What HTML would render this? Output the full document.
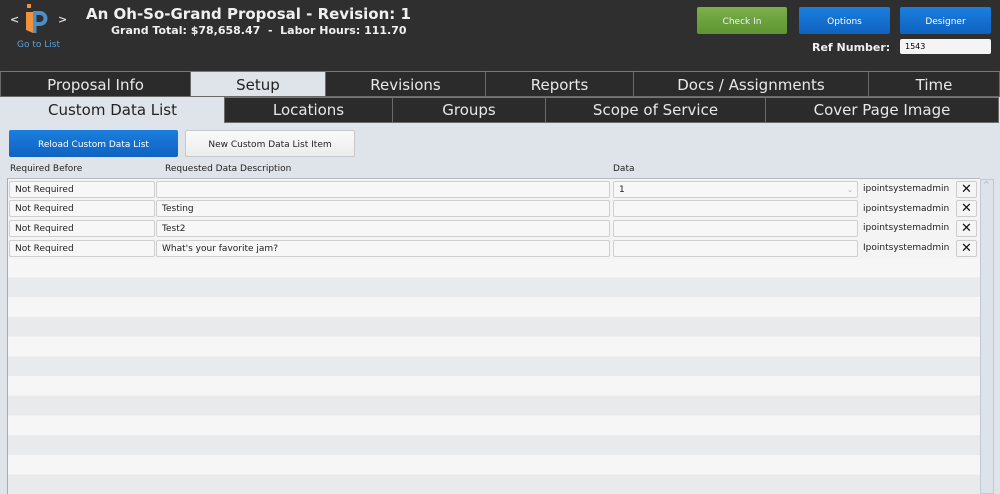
<!DOCTYPE html>
<html><head><style>
*{box-sizing:border-box;margin:0;padding:0}
body{width:1000px;height:494px;overflow:hidden;background:#dfe4ea;font-family:"DejaVu Sans","Liberation Sans",sans-serif;position:relative}
.a{position:absolute}
.hdr{left:0;top:0;width:1000px;height:71px;background:#2f2f2f}
.tab{position:absolute;background:#2b2b2b;color:#e8e8e8;text-align:center;font-size:15px;border:1px solid #6a6a6a;border-top-color:#777}
.tab.on{background:#dfe4ea;color:#222}
.btn{position:absolute;border-radius:2px;font-size:9px;display:flex;align-items:center;justify-content:center;padding-top:2px}
.fld{position:absolute;height:17px;background:#f7f7f7;border:1px solid #cfcfcf;border-radius:2px;font-size:9px;line-height:17px;padding-left:5px;color:#222}
.x{position:absolute;left:956px;width:21px;height:17px;background:#f5f5f5;border:1px solid #ccc;border-radius:2px;font-size:13px;text-align:center;line-height:15px;color:#111}
.u{position:absolute;left:863px;font-size:9px;color:#222}
.lbl{position:absolute;top:164px;font-size:9px;color:#222}
</style></head><body>
<div class="a hdr"></div>
<div class="a" style="left:10px;top:13px;color:#ddd;font-size:11px;font-weight:bold">&lt;</div>
<div class="a" style="left:58px;top:13px;color:#ddd;font-size:11px;font-weight:bold">&gt;</div>
<svg class="a" style="left:24px;top:3px" width="26" height="32" viewBox="0 0 26 32">
<rect x="3" y="1" width="4" height="4" fill="#f0923c"/>
<polygon points="2,9 9,9 9,30 2,27" fill="#f0923c"/>
<path d="M9 8 H16 A7.5 7.5 0 0 1 16 23 H12.5 V30 L9 30 Z M12.5 12 V19 H16 A3.5 3.5 0 0 0 16 12 Z" fill="#4d8fc9"/>
</svg>
<div class="a" style="left:17px;top:40px;color:#5c9fd6;font-size:9px">Go to List</div>
<div class="a" style="left:86px;top:5px;color:#f0f0f0;font-size:15px;font-weight:bold">An Oh-So-Grand Proposal - Revision: 1</div>
<div class="a" style="left:111px;top:24px;color:#f0f0f0;font-size:11px;font-weight:bold">Grand Total: $78,658.47 &nbsp;- &nbsp;Labor Hours: 111.70</div>
<div class="btn" style="left:697px;top:7px;width:90px;height:27px;background:linear-gradient(#7bb04a,#5d9530);color:#eef;">Check In</div>
<div class="btn" style="left:799px;top:7px;width:91px;height:27px;background:linear-gradient(#1b7ede,#0f63c0);color:#fff">Options</div>
<div class="btn" style="left:900px;top:7px;width:91px;height:27px;background:linear-gradient(#1b7ede,#0f63c0);color:#fff">Designer</div>
<div class="a" style="left:812px;top:41px;color:#f0f0f0;font-size:11px;font-weight:bold">Ref Number:</div>
<div class="a" style="left:900px;top:39px;width:91px;height:15px;background:#f4f4f4;border-radius:2px;font-size:8px;padding-left:5px;line-height:15px">1543</div>

<div class="tab" style="left:0;top:71px;width:191px;height:26px;line-height:26px">Proposal Info</div>
<div class="tab on" style="left:190px;top:71px;width:136px;height:26px;line-height:26px">Setup</div>
<div class="tab" style="left:325px;top:71px;width:161px;height:26px;line-height:26px">Revisions</div>
<div class="tab" style="left:485px;top:71px;width:149px;height:26px;line-height:26px">Reports</div>
<div class="tab" style="left:633px;top:71px;width:236px;height:26px;line-height:26px">Docs / Assignments</div>
<div class="tab" style="left:868px;top:71px;width:132px;height:26px;line-height:26px">Time</div>
<div class="tab on" style="left:0;top:97px;width:225px;height:26px;line-height:25px;border-color:#dfe4ea">Custom Data List</div>
<div class="tab" style="left:224px;top:97px;width:169px;height:26px;line-height:25px">Locations</div>
<div class="tab" style="left:392px;top:97px;width:154px;height:26px;line-height:25px">Groups</div>
<div class="tab" style="left:545px;top:97px;width:221px;height:26px;line-height:25px">Scope of Service</div>
<div class="tab" style="left:765px;top:97px;width:234px;height:26px;line-height:25px">Cover Page Image</div>

<div class="btn" style="left:9px;top:130px;width:169px;height:27px;background:linear-gradient(#1b7ede,#0f63c0);color:#fff">Reload Custom Data List</div>
<div class="btn" style="left:185px;top:130px;width:170px;height:27px;background:linear-gradient(#fafafa,#ececec);border:1px solid #c8c8c8;color:#222">New Custom Data List Item</div>
<div class="lbl" style="left:10px">Required Before</div>
<div class="lbl" style="left:165px">Requested Data Description</div>
<div class="lbl" style="left:613px">Data</div>

<div class="a" style="left:7px;top:178px;width:973px;height:316px;border-left:1px solid #aaa;border-top:1px solid #bbb;background:repeating-linear-gradient(#f6f6f6 0,#f6f6f6 19.7px,#e9eaeb 19.7px,#e9eaeb 39.4px)"></div>
<div class="a" style="left:8px;top:179px;width:972px;height:80px;background:#f4f4f4"></div>
<div class="a" style="left:980px;top:179px;width:14px;height:315px;background:#dde3ea;border:1px solid #c4c8cc"></div>
<div class="a" style="left:983px;top:180px;font-size:8px;color:#aaa">^</div>

<div class="fld" style="left:9px;top:181px;width:146px">Not Required</div>
<div class="fld" style="left:156px;top:181px;width:454px"></div>
<div class="fld" style="left:613px;top:181px;width:245px">1<span style="position:absolute;right:4px;color:#aaa;font-size:7px">&#8964;</span></div>
<div class="u" style="top:184px">ipointsystemadmin</div><div class="x" style="top:181px">✕</div>

<div class="fld" style="left:9px;top:200px;width:146px">Not Required</div>
<div class="fld" style="left:156px;top:200px;width:454px">Testing</div>
<div class="fld" style="left:613px;top:200px;width:245px"></div>
<div class="u" style="top:204px">ipointsystemadmin</div><div class="x" style="top:200px">✕</div>

<div class="fld" style="left:9px;top:220px;width:146px">Not Required</div>
<div class="fld" style="left:156px;top:220px;width:454px">Test2</div>
<div class="fld" style="left:613px;top:220px;width:245px"></div>
<div class="u" style="top:223px">ipointsystemadmin</div><div class="x" style="top:220px">✕</div>

<div class="fld" style="left:9px;top:240px;width:146px">Not Required</div>
<div class="fld" style="left:156px;top:240px;width:454px">What's your favorite jam?</div>
<div class="fld" style="left:613px;top:240px;width:245px"></div>
<div class="u" style="top:243px">Ipointsystemadmin</div><div class="x" style="top:240px">✕</div>
</body></html>
